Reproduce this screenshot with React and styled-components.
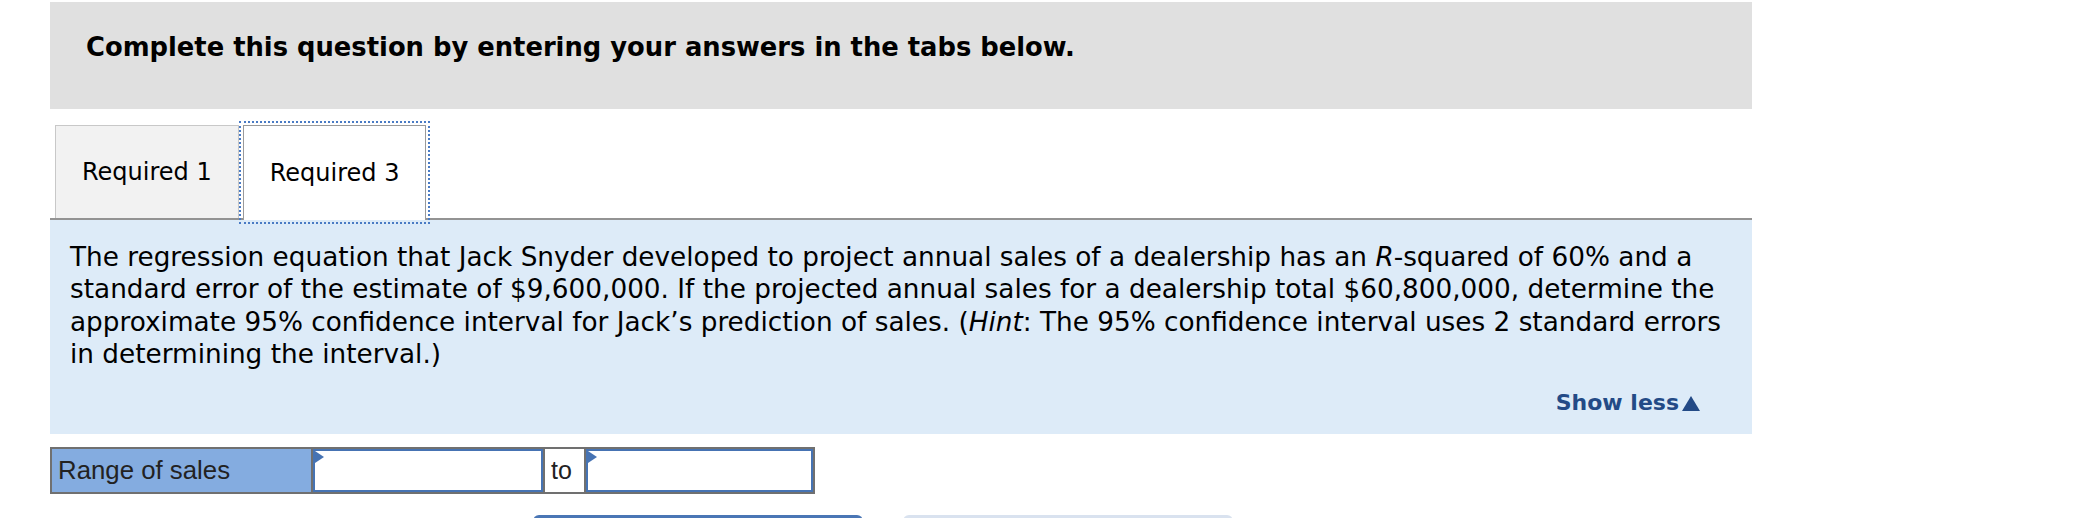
import React from "react";
import styled, { createGlobalStyle } from "styled-components";

const GlobalStyle = createGlobalStyle`
  html, body { margin: 0; padding: 0; background: #ffffff; }
  body { font-family: "DejaVu Sans", Verdana, sans-serif; color: #000; }
`;

const Page = styled.div`
  padding: 2px 0 0 50px;
  width: 1702px;
`;

const Header = styled.div`
  background: #e0e0e0;
  height: 107px;
  box-sizing: border-box;
  padding: 29px 36px 0;
`;

const Title = styled.h2`
  margin: 0;
  font-family: "DejaVu Sans", Verdana, sans-serif;
  font-weight: 700;
  font-size: 25.8px;
  line-height: 32px;
`;

const TabBar = styled.div`
  display: flex;
  align-items: flex-end;
  margin-top: 16px;
  border-bottom: 2px solid #939393;
`;

const Tab = styled.button`
  margin: 0 0 ${(p) => (p.$active ? "-2px" : "0")} ${(p) => (p.$active ? "4px" : "5px")};
  height: ${(p) => (p.$active ? "95px" : "93px")};
  box-sizing: border-box;
  padding: 0 26px;
  font-family: "DejaVu Sans", Verdana, sans-serif;
  font-size: 24px;
  color: #000;
  background: ${(p) => (p.$active ? "#ffffff" : "#f2f2f2")};
  border: 1.5px solid ${(p) => (p.$active ? "#9a9a9a" : "#c8c8c8")};
  border-bottom: 0;
  outline: ${(p) => (p.$active ? "2px dotted #4a7bc4" : "none")};
  outline-offset: 2px;
  cursor: pointer;
`;

const Panel = styled.div`
  background: #ddebf8;
  padding: 21px 20px 15px 20px;
`;

const Question = styled.p`
  margin: 0;
  font-family: "DejaVu Sans", Verdana, sans-serif;
  font-size: 26.3px;
  line-height: 32.4px;
  color: #000;
`;

const ShowLessRow = styled.div`
  display: flex;
  justify-content: flex-end;
  margin-top: 16px;
  padding-right: 32px;
`;

const ShowLess = styled.a`
  font-family: "DejaVu Sans", Verdana, sans-serif;
  font-weight: 700;
  font-size: 22px;
  line-height: 32px;
  color: #234a86;
  text-decoration: none;
  display: inline-flex;
  align-items: center;
  gap: 3px;
`;

const Triangle = styled.span`
  display: inline-block;
  width: 0;
  height: 0;
  border-left: 9.5px solid transparent;
  border-right: 9.5px solid transparent;
  border-bottom: 15px solid #234a86;
  margin-top: 1px;
`;

const AnswerTable = styled.table`
  margin-top: 13px;
  border-collapse: collapse;
  border: 2px solid #707070;
`;

const LabelCell = styled.td`
  width: 261px;
  height: 43px;
  box-sizing: border-box;
  padding: 0 6px;
  background: #84ace0;
  border: 2px solid #707070;
  font-family: "Liberation Sans", Arial, sans-serif;
  font-size: 25.8px;
  color: #222;
`;

const InputCell = styled.td`
  padding: 0;
  border: 2px solid #707070;
  position: relative;
  width: ${(p) => p.$w}px;
  height: 43px;
`;

const TextInput = styled.input`
  display: block;
  width: 100%;
  height: 43px;
  box-sizing: border-box;
  margin: 0;
  border: 2px solid #4673b3;
  background: #ffffff;
  outline: none;
  font-family: "Liberation Sans", Arial, sans-serif;
  font-size: 24px;
  padding: 0 8px;
`;

const Marker = styled.span`
  position: absolute;
  top: 2px;
  left: 2px;
  width: 0;
  height: 0;
  border-top: 6.5px solid transparent;
  border-bottom: 6.5px solid transparent;
  border-left: 9px solid #4673b3;
  pointer-events: none;
`;

const ToCell = styled.td`
  width: 41px;
  height: 43px;
  box-sizing: border-box;
  padding: 0 6px;
  background: #ffffff;
  border: 2px solid #707070;
  font-family: "Liberation Sans", Arial, sans-serif;
  font-size: 25px;
  color: #222;
`;

const NavRow = styled.div`
  display: flex;
  gap: 40px;
  margin-top: 21px;
  padding-left: 483px;
`;

const NavButton = styled.button`
  width: 330px;
  height: 52px;
  border: none;
  border-radius: 6px;
  background: ${(p) => (p.$primary ? "#4a76b5" : "#d9e2ef")};
  color: ${(p) => (p.$primary ? "#ffffff" : "#8a9bb5")};
  font-family: "DejaVu Sans", Verdana, sans-serif;
  font-size: 22px;
  font-weight: 700;
`;

export default function App() {
  return (
    <>
      <GlobalStyle />
      <Page>
        <Header>
          <Title>Complete this question by entering your answers in the tabs below.</Title>
        </Header>

        <TabBar>
          <Tab>Required 1</Tab>
          <Tab $active>Required 3</Tab>
        </TabBar>

        <Panel>
          <Question>
            The regression equation that Jack Snyder developed to project annual sales of a
            dealership has an <i>R</i>-squared of 60% and a standard error of the estimate of
            $9,600,000. If the projected annual sales for a dealership total $60,800,000,
            determine the approximate 95% confidence interval for Jack’s prediction of sales. (
            <i>Hint</i>: The 95% confidence interval uses 2 standard errors in determining the
            interval.)
          </Question>
          <ShowLessRow>
            <ShowLess href="#">
              Show less
              <Triangle />
            </ShowLess>
          </ShowLessRow>
        </Panel>

        <AnswerTable>
          <tbody>
            <tr>
              <LabelCell>Range of sales</LabelCell>
              <InputCell $w={230}>
                <TextInput type="text" />
                <Marker />
              </InputCell>
              <ToCell>to</ToCell>
              <InputCell $w={227}>
                <TextInput type="text" />
                <Marker />
              </InputCell>
            </tr>
          </tbody>
        </AnswerTable>

        <NavRow>
          <NavButton $primary>&lt; Required 1</NavButton>
          <NavButton>Required 3 &gt;</NavButton>
        </NavRow>
      </Page>
    </>
  );
}
